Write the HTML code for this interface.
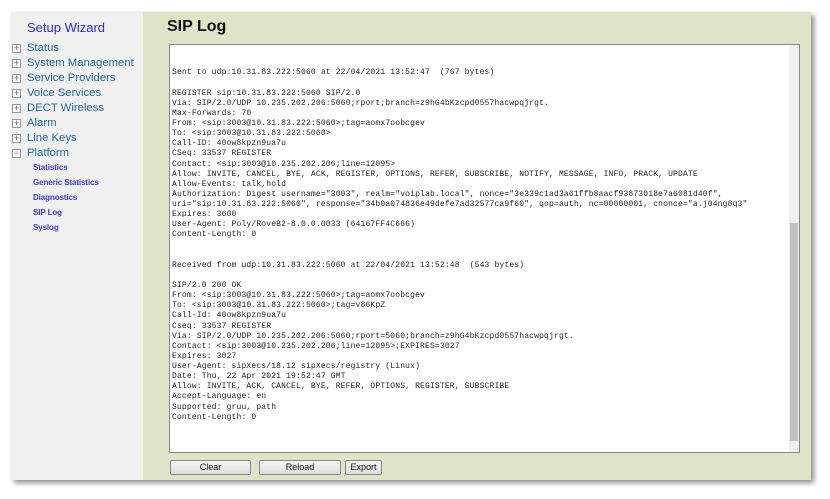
<!DOCTYPE html>
<html><head><style>
body{margin:0;width:830px;height:499px;background:#fff;position:relative;overflow:hidden;font-family:"Liberation Sans",sans-serif}
#frame{position:absolute;left:11px;top:12px;width:800px;height:468px;background:#dfe3c8;box-shadow:3px 3px 5px rgba(0,0,0,.45)}
#side{position:absolute;left:0;top:0;width:132px;height:468px;background:#f0f0f0}
.sw{position:absolute;left:16px;top:8px;font-size:13px;color:#2b2be6}
.mi{position:absolute;left:16px;font-size:11.3px;color:#2264a8;line-height:14px}
.bx{position:absolute;left:1px;width:7px;height:7px;border:1px solid #999;background:#fff;font-size:9px;line-height:7px;text-align:center;color:#555}
.si{position:absolute;left:22px;font-size:8px;color:#3a3adc;font-weight:bold;letter-spacing:-.1px}
h1{position:absolute;left:156px;top:6px;margin:0;font-size:16px;font-weight:bold;color:#111}
#ta{position:absolute;left:158px;top:32px;width:629px;height:407px;background:#fff;border:1px solid #888;overflow:hidden}
pre{position:absolute;left:2px;top:-7px;margin:0;font-family:"Liberation Mono",monospace;font-size:8px;letter-spacing:.16px;line-height:10.12px;color:#222}
#sb{position:absolute;right:0;top:0;width:10px;height:407px;background:#f0f0f0}
#th{position:absolute;left:1px;top:178px;width:8px;height:218px;background:#c1c1c1}
.btn{position:absolute;top:448px;height:13px;border:1px solid #888;border-radius:2px;background:linear-gradient(#f6f6f6,#dcdcdc);font-size:9px;text-align:center;line-height:13px;color:#111}
</style></head><body>
<div id="frame">
<div id="side">
<div class="sw">Setup Wizard</div>
<div class="mi" style="top:29px"><span class="bx" style="left:-15px;top:3px">+</span>Status</div>
<div class="mi" style="top:44px"><span class="bx" style="left:-15px;top:3px">+</span>System Management</div>
<div class="mi" style="top:59px"><span class="bx" style="left:-15px;top:3px">+</span>Service Providers</div>
<div class="mi" style="top:74px"><span class="bx" style="left:-15px;top:3px">+</span>Voice Services</div>
<div class="mi" style="top:89px"><span class="bx" style="left:-15px;top:3px">+</span>DECT Wireless</div>
<div class="mi" style="top:104px"><span class="bx" style="left:-15px;top:3px">+</span>Alarm</div>
<div class="mi" style="top:119px"><span class="bx" style="left:-15px;top:3px">+</span>Line Keys</div>
<div class="mi" style="top:134px"><span class="bx" style="left:-15px;top:3px">−</span>Platform</div>
<div class="si" style="top:151px">Statistics</div>
<div class="si" style="top:166px">Generic Statistics</div>
<div class="si" style="top:181px">Diagnostics</div>
<div class="si" style="top:196px">SIP Log</div>
<div class="si" style="top:211px">Syslog</div>
</div>
<h1>SIP Log</h1>
<div id="ta"><pre>



Sent to udp:10.31.83.222:5060 at 22/04/2021 13:52:47  (767 bytes)

REGISTER sip:10.31.83.222:5060 SIP/2.0
Via: SIP/2.0/UDP 10.235.202.206:5060;rport;branch=z9hG4bKzcpd0557hacwpqjrgt.
Max-Forwards: 70
From: &lt;sip:3003@10.31.83.222:5060&gt;;tag=aomx7oobcgev
To: &lt;sip:3003@10.31.83.222:5060&gt;
Call-ID: 40ow8kpzn9ua7u
CSeq: 33537 REGISTER
Contact: &lt;sip:3003@10.235.202.206;line=12095&gt;
Allow: INVITE, CANCEL, BYE, ACK, REGISTER, OPTIONS, REFER, SUBSCRIBE, NOTIFY, MESSAGE, INFO, PRACK, UPDATE
Allow-Events: talk,hold
Authorization: Digest username="3003", realm="voiplab.local", nonce="3e339c1ad3a61ffb8aacf93873018e7a6081d40f",
uri="sip:10.31.83.222:5060", response="34b0a074836e49defe7ad32577ca9f60", qop=auth, nc=00000001, cnonce="a.j04ng8q3"
Expires: 3600
User-Agent: Poly/RoveB2-8.0.0.0033 (64167FF4C666)
Content-Length: 0


Received from udp:10.31.83.222:5060 at 22/04/2021 13:52:48  (543 bytes)

SIP/2.0 200 OK
From: &lt;sip:3003@10.31.83.222:5060&gt;;tag=aomx7oobcgev
To: &lt;sip:3003@10.31.83.222:5060&gt;;tag=v86KpZ
Call-Id: 40ow8kpzn9ua7u
Cseq: 33537 REGISTER
Via: SIP/2.0/UDP 10.235.202.206:5060;rport=5060;branch=z9hG4bKzcpd0557hacwpqjrgt.
Contact: &lt;sip:3003@10.235.202.206;line=12095&gt;;EXPIRES=3027
Expires: 3027
User-Agent: sipXecs/18.12 sipXecs/registry (Linux)
Date: Thu, 22 Apr 2021 19:52:47 GMT
Allow: INVITE, ACK, CANCEL, BYE, REFER, OPTIONS, REGISTER, SUBSCRIBE
Accept-Language: en
Supported: gruu, path
Content-Length: 0</pre>
<div id="sb"><div id="th"></div></div>
</div>
<div class="btn" style="left:159px;width:79px">Clear</div>
<div class="btn" style="left:248px;width:80px">Reload</div>
<div class="btn" style="left:334px;width:35px">Export</div>
</div>
</body></html>
